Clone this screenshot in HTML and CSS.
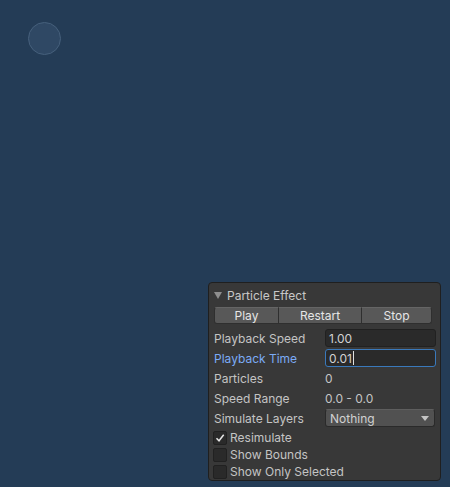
FILE: index.html
```html
<!DOCTYPE html>
<html>
<head>
<meta charset="utf-8">
<link rel="stylesheet" href="styles.css">
</head>
<body>
<div class="scene">
  <div class="gizmo"></div>
  <div class="overlay">
    <div class="title"><span class="fold"></span>Particle Effect</div>
    <div class="buttons">
      <div class="btn btn-play">Play</div>
      <div class="btn btn-restart">Restart</div>
      <div class="btn btn-stop">Stop</div>
    </div>
    <div class="row"><div class="label">Playback Speed</div><div class="field">1.00</div></div>
    <div class="row"><div class="label label-focus">Playback Time</div><div class="field field-focus">0.01<span class="caret"></span></div></div>
    <div class="row"><div class="label">Particles</div><div class="value">0</div></div>
    <div class="row"><div class="label">Speed Range</div><div class="value">0.0 - 0.0</div></div>
    <div class="row"><div class="label">Simulate Layers</div><div class="dropdown">Nothing<span class="arrow"></span></div></div>
    <div class="check-row"><span class="box checked"><svg width="10" height="10" viewBox="0 0 10 10"><path d="M1.5 5.2 L4 7.8 L8.7 1.8" fill="none" stroke="#e6e6e6" stroke-width="1.5"/></svg></span>Resimulate</div>
    <div class="check-row"><span class="box"></span>Show Bounds</div>
    <div class="check-row"><span class="box"></span>Show Only Selected</div>
  </div>
</div>
</body>
</html>
```
FILE: styles.css
```css
html, body {
  margin: 0;
  padding: 0;
  width: 450px;
  height: 487px;
  overflow: hidden;
  background: #243c56;
  font-family: Inter, "Noto Sans", sans-serif;
  font-size: 12px;
}
.scene {
  position: relative;
  width: 450px;
  height: 487px;
}
.gizmo {
  position: absolute;
  left: 28px;
  top: 22px;
  width: 31px;
  height: 31px;
  border-radius: 50%;
  background: #2f4864;
  border: 1px solid #46607c;
}
.overlay {
  position: absolute;
  left: 208px;
  top: 282px;
  width: 233px;
  height: 199px;
  box-sizing: border-box;
  background: #383838;
  border: 1px solid #1f1f1f;
  border-radius: 4px;
  padding: 3px 4px 0 5px;
  color: #c4c4c4;
  display: flex;
  flex-direction: column;
}
.title {
  height: 18px;
  display: flex;
  align-items: center;
  color: #c8c8c8;
}
.fold {
  width: 0;
  height: 0;
  border-left: 4px solid transparent;
  border-right: 4px solid transparent;
  border-top: 7px solid #8e8e8e;
  margin-right: 5px;
  margin-top: 1px;
}
.buttons {
  display: flex;
  margin-top: 3px;
  height: 17px;
}
.btn {
  box-sizing: border-box;
  height: 17px;
  background: #585858;
  border: 1px solid #2f2f2f;
  border-top-color: #656565;
  color: #e6e6e6;
  display: flex;
  align-items: center;
  justify-content: center;
}
.btn-play { width: 65px; border-radius: 3px 0 0 3px; }
.btn-restart { width: 83px; border-left: none; }
.btn-stop { width: 70px; border-left: none; border-radius: 0 3px 3px 0; }
.row {
  height: 18px;
  margin-top: 2px;
  display: flex;
  align-items: center;
}
.buttons + .row { margin-top: 5px; }
.label {
  width: 111px;
  flex: none;
}
.label-focus { color: #7babf6; }
.field {
  box-sizing: border-box;
  flex: 1;
  height: 18px;
  background: #2a2a2a;
  border: 1px solid #212121;
  border-radius: 3px;
  padding-left: 3px;
  display: flex;
  align-items: center;
  color: #d2d2d2;
}
.field-focus {
  border-color: #3a79bb;
}
.caret {
  width: 1px;
  height: 14px;
  background: #e0e0e0;
  margin-left: 1px;
}
.value {
  flex: 1;
  color: #c4c4c4;
}
.dropdown {
  box-sizing: border-box;
  flex: 1;
  height: 18px;
  background: #515151;
  border: 1px solid #2a2a2a;
  border-top-color: #5e5e5e;
  border-radius: 3px;
  padding-left: 4px;
  display: flex;
  align-items: center;
  justify-content: space-between;
  color: #d2d2d2;
  margin-right: 1px;
}
.arrow {
  width: 0;
  height: 0;
  border-left: 4px solid transparent;
  border-right: 4px solid transparent;
  border-top: 5px solid #c4c4c4;
  margin-right: 5px;
}
.check-row {
  height: 17px;
  display: flex;
  align-items: center;
  color: #c4c4c4;
}
.row + .check-row { margin-top: 2px; }
.box {
  box-sizing: border-box;
  width: 14px;
  height: 14px;
  margin-left: -1px;
  margin-right: 3px;
  background: #2a2a2a;
  border: 1px solid #212121;
  border-radius: 2px;
  display: flex;
  align-items: center;
  justify-content: center;
}
```
